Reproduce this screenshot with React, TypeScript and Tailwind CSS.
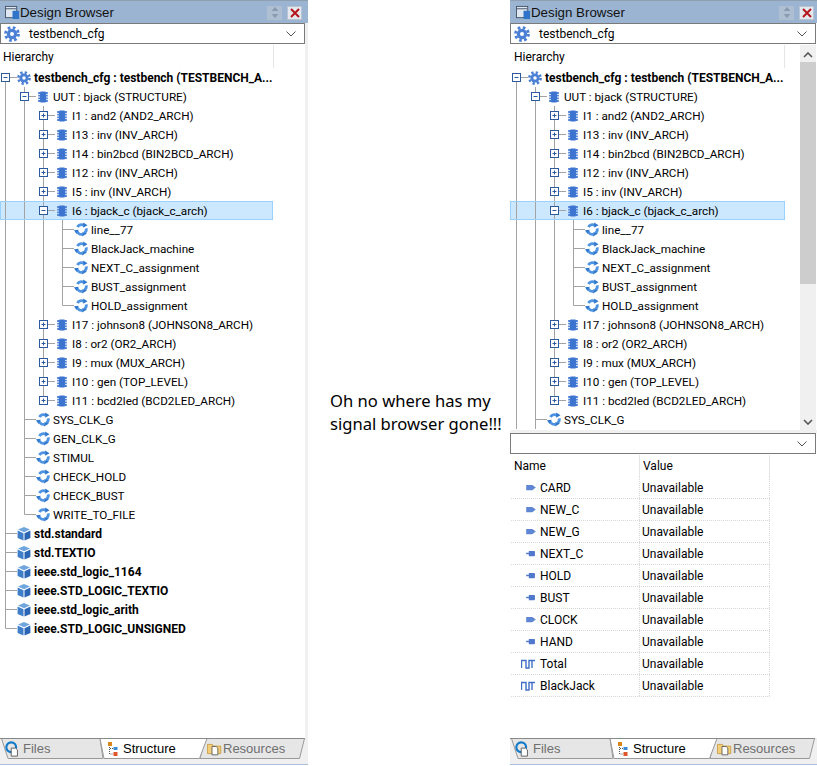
import clsx from 'clsx'

type Kind = 'gear' | 'chip' | 'proc' | 'pkg'
type TreeNode = {
  label: string
  kind: Kind
  bold?: boolean
  open?: boolean
  selected?: boolean
  children?: TreeNode[]
}
type Row = { node: TreeNode; guides: boolean[]; first: boolean; last: boolean }

const chip = (label: string, extra?: Partial<TreeNode>): TreeNode => ({ label, kind: 'chip', children: [], ...extra })
const proc = (label: string): TreeNode => ({ label, kind: 'proc' })
const pkg = (label: string): TreeNode => ({ label, kind: 'pkg', bold: true })

const tree: TreeNode[] = [
  {
    label: 'testbench_cfg : testbench (TESTBENCH_A...',
    kind: 'gear',
    bold: true,
    open: true,
    children: [
      chip('UUT : bjack (STRUCTURE)', {
        open: true,
        children: [
          chip('I1 : and2 (AND2_ARCH)'),
          chip('I13 : inv (INV_ARCH)'),
          chip('I14 : bin2bcd (BIN2BCD_ARCH)'),
          chip('I12 : inv (INV_ARCH)'),
          chip('I5 : inv (INV_ARCH)'),
          chip('I6 : bjack_c (bjack_c_arch)', {
            open: true,
            selected: true,
            children: [
              proc('line__77'),
              proc('BlackJack_machine'),
              proc('NEXT_C_assignment'),
              proc('BUST_assignment'),
              proc('HOLD_assignment'),
            ],
          }),
          chip('I17 : johnson8 (JOHNSON8_ARCH)'),
          chip('I8 : or2 (OR2_ARCH)'),
          chip('I9 : mux (MUX_ARCH)'),
          chip('I10 : gen (TOP_LEVEL)'),
          chip('I11 : bcd2led (BCD2LED_ARCH)'),
        ],
      }),
      proc('SYS_CLK_G'),
      proc('GEN_CLK_G'),
      proc('STIMUL'),
      proc('CHECK_HOLD'),
      proc('CHECK_BUST'),
      proc('WRITE_TO_FILE'),
    ],
  },
  pkg('std.standard'),
  pkg('std.TEXTIO'),
  pkg('ieee.std_logic_1164'),
  pkg('ieee.STD_LOGIC_TEXTIO'),
  pkg('ieee.std_logic_arith'),
  pkg('ieee.STD_LOGIC_UNSIGNED'),
]

function flatten(nodes: TreeNode[], guides: boolean[], top: boolean): Row[] {
  return nodes.flatMap((node, i) => {
    const last = i === nodes.length - 1
    const row: Row = { node, guides, first: top && i === 0, last }
    const kids = node.open && node.children ? flatten(node.children, [...guides, !last], false) : []
    return [row, ...kids]
  })
}

const rows = flatten(tree, [], true)

const signals: { name: string; kind: 'in' | 'out' | 'wave' }[] = [
  { name: 'CARD', kind: 'in' },
  { name: 'NEW_C', kind: 'in' },
  { name: 'NEW_G', kind: 'in' },
  { name: 'NEXT_C', kind: 'out' },
  { name: 'HOLD', kind: 'out' },
  { name: 'BUST', kind: 'out' },
  { name: 'CLOCK', kind: 'in' },
  { name: 'HAND', kind: 'out' },
  { name: 'Total', kind: 'wave' },
  { name: 'BlackJack', kind: 'wave' },
]

function NodeIcon({ kind }: { kind: Kind }) {
  if (kind === 'gear') return <GearIcon />
  if (kind === 'chip') {
    return (
      <svg width="14" height="14" viewBox="0 0 14 14" className="-ml-[2px] shrink-0">
        <rect x="4" y="1.5" width="6" height="11" rx="1" fill="#3d74cf" />
        <path d="M2.2 3h2M2.2 5.7h2M2.2 8.4h2M2.2 11h2M9.8 3h2M9.8 5.7h2M9.8 8.4h2M9.8 11h2" stroke="#4b80d6" strokeWidth="1.8" />
      </svg>
    )
  }
  if (kind === 'proc') {
    return (
      <svg width="15" height="15" viewBox="0 0 16 16" className="-ml-[2px] shrink-0">
        <path d="M3.6 5.4A5 5 0 0 1 10.4 3.6" fill="none" stroke="#4f94e2" strokeWidth="3" />
        <path d="M13 6.8a5 5 0 0 1-1.8 5" fill="none" stroke="#4f94e2" strokeWidth="3" />
        <path d="M9 13A5 5 0 0 1 3 9.2" fill="none" stroke="#4f94e2" strokeWidth="3" />
        <path d="M9.8 .4l4.6 3-4.6 2.6zM13.8 12.2L8.6 15.4l.4-4.8zM0 8.8l5-.6-2.4 4.6z" fill="#2f78cc" />
      </svg>
    )
  }
  return (
    <svg width="16" height="16" viewBox="0 0 16 16" className="-ml-[3px] shrink-0">
      <path d="M8 1l6 2.6L8 6.2 2 3.6z" fill="#6fa6dc" />
      <path d="M1.6 4.6l5.9 2.6v7.4L1.6 12z" fill="#3f7fca" />
      <path d="M14.4 4.6L8.5 7.2v7.4l5.9-2.6z" fill="#2b66b4" />
    </svg>
  )
}

function GearIcon() {
  return (
    <svg width="14" height="14" viewBox="0 0 16 16" className="-ml-[2px] shrink-0">
      <circle cx="8" cy="8" r="6.4" fill="none" stroke="#4c80d4" strokeWidth="3" strokeDasharray="2.6 2.43" />
      <circle cx="8" cy="8" r="5.2" fill="#4c80d4" />
      <circle cx="8" cy="8" r="2" fill="#fff" />
    </svg>
  )
}

function Connector({ first, last, hasBox, open }: { first: boolean; last: boolean; hasBox: boolean; open?: boolean }) {
  return (
    <svg width="19" height="19" viewBox="0 0 19 19" className="shrink-0">
      <path d={`M5.5 ${first ? 9.5 : 0}V${last ? 9.5 : 19}M5.5 9.5H17`} stroke="#a3a3a3" fill="none" />
      {hasBox && (
        <g>
          <rect x="1.5" y="5.5" width="8" height="8" fill="#fff" stroke="#2d5a9e" />
          <path d={open ? 'M3.5 9.5h4' : 'M3.5 9.5h4M5.5 7.5v4'} stroke="#2d5a9e" />
        </g>
      )}
    </svg>
  )
}

function TreeRow({ row, inset }: { row: Row; inset?: boolean }) {
  const { node, guides, first, last } = row
  return (
    <div
      className={clsx(
        'flex h-[19px] shrink-0 items-center',
        inset ? 'w-[275px] pl-px' : 'w-[273px]',
        node.selected && 'bg-[#cce8ff] outline outline-1 -outline-offset-1 outline-[#99d1ff]',
      )}
    >
      {guides.map((g, i) => (
        <div key={i} className={clsx('ml-[5px] h-full w-[14px] shrink-0', g && 'border-l border-[#a3a3a3]')} />
      ))}
      <Connector first={first} last={last} hasBox={!!node.children} open={node.open} />
      <div className="flex w-[15px] shrink-0 items-center">
        <NodeIcon kind={node.kind} />
      </div>
      <span
        className={clsx(
          'whitespace-nowrap pt-px leading-[18px] text-black',
          node.bold ? 'text-[12px] font-bold' : 'text-[11.7px]',
        )}
      >
        {node.label}
      </span>
    </div>
  )
}

function Chevron() {
  return (
    <svg width="10" height="6" viewBox="0 0 10 6" className="shrink-0">
      <path d="M.5.5L5 5 9.5.5" fill="none" stroke="#555" />
    </svg>
  )
}

function TitleBar({ right }: { right?: boolean }) {
  return (
    <div
      className={clsx(
        'flex h-[23px] items-center bg-[#9ab4d1] pt-[2px] shadow-[inset_0_1px_0_#8f9fb0]',
        right ? 'pl-[6px] pr-[3px]' : 'pl-[5px] pr-[6px]',
      )}
    >
      <svg width="15" height="15" viewBox="0 0 16 16" className="shrink-0">
        <rect x="0.5" y="1.5" width="12" height="12" fill="#dfe7f0" stroke="#44546a" />
        <path d="M1 4h11" stroke="#44546a" />
        <rect x="8" y="6" width="7" height="9" rx="1" fill="#2f74c8" />
      </svg>
      <span className="font-['Liberation_Sans',sans-serif] text-[13.3px] leading-none text-[#111]">Design Browser</span>
      <div className="ml-auto flex gap-[5px]">
        <div className="flex h-[14px] w-[15px] items-center justify-center bg-[#aebfd2]">
          <svg width="8" height="11" viewBox="0 0 8 11">
            <path d="M4 0l3.5 4H.5zM4 11L.5 7h7z" fill="#8a9bb0" />
          </svg>
        </div>
        <div className="flex h-[14px] w-[15px] items-center justify-center border border-[#b7c4d3] bg-[#e4e8ed]">
          <svg width="10" height="10" viewBox="0 0 10 10">
            <path d="M1 1l8 8M9 1L1 9" stroke="#b3161c" strokeWidth="2" />
          </svg>
        </div>
      </div>
    </div>
  )
}

function Combo({ label }: { label?: string }) {
  return (
    <div className="flex h-[21px] items-center border border-[#7a7a7a] bg-white pl-[2px] pr-[8px]">
      {label && <GearFlat />}
      {label && <span className="ml-[9px] pt-px text-[12px] text-black">{label}</span>}
      <div className="ml-auto">
        <Chevron />
      </div>
    </div>
  )
}

function GearFlat() {
  return (
    <svg width="16" height="16" viewBox="0 0 16 16" className="ml-px shrink-0">
      <circle cx="8" cy="8" r="6.4" fill="none" stroke="#4c80d4" strokeWidth="3" strokeDasharray="2.6 2.43" />
      <circle cx="8" cy="8" r="5.2" fill="#4c80d4" />
      <circle cx="8" cy="8" r="2" fill="#fff" />
    </svg>
  )
}

function FilesIcon() {
  return (
    <svg width="16" height="16" viewBox="0 0 18 18" className="shrink-0">
      <circle cx="7" cy="7" r="5.5" fill="none" stroke="#1279c8" strokeWidth="2.4" />
      <path d="M7 8h5l2 2v7H7z" fill="#fff" stroke="#555" />
    </svg>
  )
}

function StructureIcon() {
  return (
    <svg width="10" height="14" viewBox="0 0 10 14" className="shrink-0">
      <rect x="0" y="0" width="4" height="4" fill="#d9861c" />
      <rect x="5.5" y="5" width="4" height="3" fill="#3f8ad8" />
      <rect x="5.5" y="10" width="4" height="4" fill="#e0562a" />
      <path d="M1.5 5v7H5M2 6.5h3" stroke="#555" strokeDasharray="1 1" fill="none" />
    </svg>
  )
}

function ResourcesIcon() {
  return (
    <svg width="15" height="14" viewBox="0 0 18 16" className="ml-px shrink-0">
      <path d="M.5 2.5h6l1 2h9v9H.5z" fill="#f3cd77" stroke="#c59a3c" />
      <path d="M6 5h5l2 2v8H6z" fill="#fff" stroke="#555" />
    </svg>
  )
}

function Tabs() {
  return (
    <div className="relative h-[21px] w-[305px] text-[13px] leading-none">
      <svg width="305" height="21" viewBox="0 0 305 21" className="absolute left-0 top-0">
        <path d="M1.5 .5L8 20.5H103L100 .5z" fill="#e6e6e6" stroke="#999" />
        <path d="M205 .5L200 20.5H299.5L304.5 .5z" fill="#e6e6e6" stroke="#999" />
        <path d="M100 .5L104 20.5H199.5L207 .5z" fill="#fff" stroke="#999" />
        <path d="M0 .5H305" stroke="#888" />
      </svg>
      <div className="relative flex h-full items-center font-['Liberation_Sans',sans-serif]">
        <div className="flex w-[108px] items-center gap-[2px] pl-[5px] text-[#6f6f6f]">
          <FilesIcon />
          <span>Files</span>
        </div>
        <div className="flex w-[98px] items-center gap-[5px] text-black">
          <StructureIcon />
          <span>Structure</span>
        </div>
        <div className="flex items-center gap-[1px] text-[#6f6f6f]">
          <ResourcesIcon />
          <span>Resources</span>
        </div>
      </div>
    </div>
  )
}

function Footer() {
  return (
    <div className="flex h-[28px] shrink-0 flex-col bg-[#f0f0f0]">
      <Tabs />
      <div className="mt-auto h-[1px] bg-[#a9c0dc]" />
      <div className="h-[1px] bg-white" />
    </div>
  )
}

function Scrollbar() {
  return (
    <div className="mr-px flex w-[16px] shrink-0 flex-col items-center bg-[#f0f0f0]">
      <div className="flex h-[17px] items-center pt-[3px]">
        <svg width="10" height="6" viewBox="0 0 10 6">
          <path d="M1 5l4-4 4 4" fill="none" stroke="#555" strokeWidth="1.6" />
        </svg>
      </div>
      <div className="h-[222px] w-full bg-[#cdcdcd]" />
      <div className="mt-auto flex h-[17px] items-center">
        <svg width="10" height="6" viewBox="0 0 10 6">
          <path d="M1 1l4 4 4-4" fill="none" stroke="#555" strokeWidth="1.6" />
        </svg>
      </div>
    </div>
  )
}

function SignalIcon({ kind }: { kind: 'in' | 'out' | 'wave' }) {
  if (kind === 'wave') {
    return (
      <svg width="15" height="10" viewBox="0 0 15 10" className="shrink-0">
        <path d="M.5 9V1.5H5V9h3V1.5h6" fill="none" stroke="#3f6fc4" strokeWidth="1.4" />
        <path d="M11 1.5V9" stroke="#3f6fc4" strokeWidth="1.4" />
      </svg>
    )
  }
  return (
    <svg width="10" height="7" viewBox="0 0 11 8" className="shrink-0">
      {kind === 'in' ? (
        <path d="M0 1h7l4 3-4 3H0z" fill="#5f86d4" />
      ) : (
        <path d="M0 3.2h3V1h6a1 1 0 0 1 1 1v4a1 1 0 0 1-1 1H3V4.8H0z" fill="#4f78cc" />
      )}
    </svg>
  )
}

function SignalTable() {
  return (
    <div className="ml-px w-[259px] text-[12px] text-black">
      <div className="flex h-[22px] items-center">
        <div className="flex h-full w-[129px] items-center border-r border-[#e5e5e5] pl-[3px]">Name</div>
        <div className="flex h-full flex-1 items-center border-r border-[#e5e5e5] pl-[3px]">Value</div>
      </div>
      {signals.map((s) => (
        <div key={s.name} className="flex h-[22px] items-center border-b border-dotted border-[#d8d8d8]">
          <div className="flex h-full w-[129px] items-center border-r border-dotted border-[#d8d8d8]">
            <div className="flex w-[29px] shrink-0 justify-end pr-[4px]">
              <SignalIcon kind={s.kind} />
            </div>
            <span className="pt-px">{s.name}</span>
          </div>
          <div className="flex h-full flex-1 items-center border-r border-dotted border-[#d8d8d8] pl-[2px] pt-px">Unavailable</div>
        </div>
      ))}
    </div>
  )
}

function Hierarchy({ inset }: { inset?: boolean }) {
  return (
    <div
      className={clsx(
        'flex h-[23px] shrink-0 items-center border-r border-[#e5e5e5] text-[12px] text-black',
        inset ? 'w-[275px] pl-[4px]' : 'w-[274px] pl-[3px]',
      )}
    >
      Hierarchy
    </div>
  )
}

export default function App() {
  return (
    <div className="flex h-[766px] w-[817px] overflow-hidden bg-white font-['Roboto','Noto_Sans',sans-serif]">
      <div className="flex w-[308px] shrink-0 flex-col bg-[#f0f0f0]">
        <TitleBar />
        <div className="flex min-h-0 flex-1 flex-col">
          <div className="w-[305px]">
            <Combo label="testbench_cfg" />
          </div>
          <div className="flex w-[305px] flex-1 flex-col bg-white pt-px">
            <Hierarchy />
            <div className="flex flex-col">
              {rows.map((r, i) => (
                <TreeRow key={i} row={r} />
              ))}
            </div>
          </div>
        </div>
        <Footer />
      </div>

      <div className="flex w-[202px] shrink-0 flex-col pl-[22px] pt-[389px] font-['Noto_Sans',sans-serif] text-[16.6px] leading-[23px] text-black">
        <p>Oh no where has my</p>
        <p>signal browser gone!!!</p>
      </div>

      <div className="flex w-[307px] shrink-0 flex-col">
        <TitleBar right />
        <div className="w-[306px]">
          <Combo label="testbench_cfg" />
        </div>
        <div className="flex h-[386px] shrink-0 bg-white pt-px">
          <div className="flex min-w-0 flex-1 flex-col overflow-hidden">
            <Hierarchy inset />
            {rows.slice(0, 19).map((r, i) => (
              <TreeRow key={i} row={r} inset />
            ))}
          </div>
          <Scrollbar />
        </div>
        <div className="h-[3px] shrink-0 bg-[#f0f0f0]" />
        <div className="w-[306px] shrink-0">
          <Combo />
        </div>
        <div className="flex-1 bg-white pt-px">
          <SignalTable />
        </div>
        <Footer />
      </div>
    </div>
  )
}
